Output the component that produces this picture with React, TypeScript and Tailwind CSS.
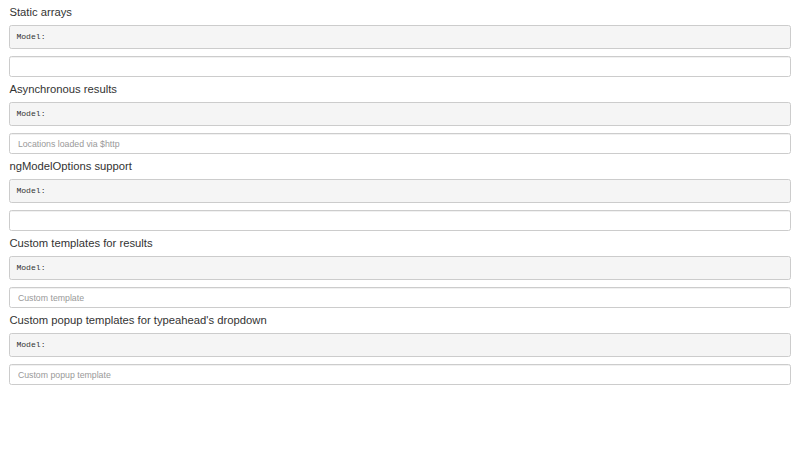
import React from "react";

type Section = { title: string; placeholder: string };

const sections: Section[] = [
  { title: "Static arrays", placeholder: "" },
  { title: "Asynchronous results", placeholder: "Locations loaded via $http" },
  { title: "ngModelOptions support", placeholder: "" },
  { title: "Custom templates for results", placeholder: "Custom template" },
  { title: "Custom popup templates for typeahead's dropdown", placeholder: "Custom popup template" },
];

export default function App() {
  return (
    <div className="w-[800px] h-[450px] bg-white px-[9.375px] text-[#333] font-['Liberation_Sans',Arial,sans-serif] text-[8.75px]">
      {sections.map((s) => (
        <div key={s.title}>
          <h4 className="mt-[6px] mb-[6px] h-[13px] text-[11.25px] leading-[13px] font-medium text-[#333]">
            {s.title}
          </h4>
          <pre className="mb-[7px] h-[24px] flex items-center px-[6px] bg-[#f5f5f5] border border-[#ccc] rounded-[2.5px] font-['Liberation_Mono','Courier_New',monospace] text-[8.125px] leading-[12px] text-[#333]">
            Model:
          </pre>
          <input
            type="text"
            placeholder={s.placeholder}
            className="block w-full h-[21px] px-[7.5px] py-0 bg-white border border-[#ccc] rounded-[2.5px] shadow-[inset_0_0.625px_0.625px_rgba(0,0,0,0.075)] text-[8.75px] leading-[19px] text-[#555] placeholder:text-[#999] outline-none font-['Liberation_Sans',Arial,sans-serif]"
          />
        </div>
      ))}
    </div>
  );
}
